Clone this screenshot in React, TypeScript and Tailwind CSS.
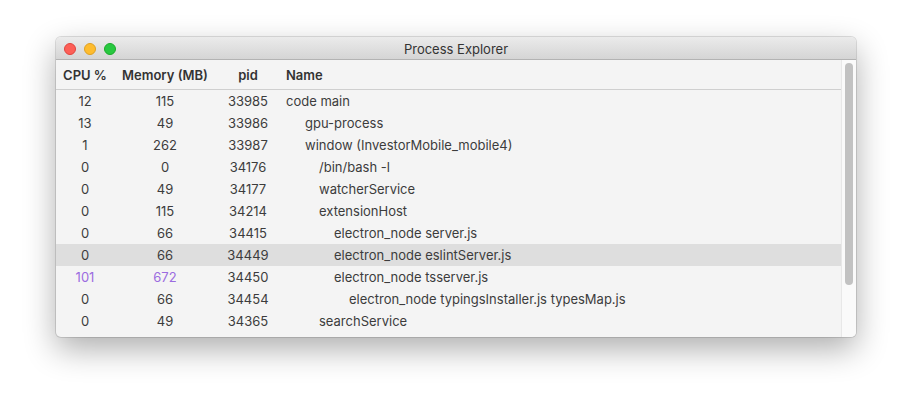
import React from "react";

type Row = { cpu: string; mem: string; pid: string; name: string; indent: number; hot?: boolean; sel?: boolean };

const rows: Row[] = [
  { cpu: "12", mem: "115", pid: "33985", name: "code main", indent: 0 },
  { cpu: "13", mem: "49", pid: "33986", name: "gpu-process", indent: 1 },
  { cpu: "1", mem: "262", pid: "33987", name: "window (InvestorMobile_mobile4)", indent: 1 },
  { cpu: "0", mem: "0", pid: "34176", name: "/bin/bash -l", indent: 2 },
  { cpu: "0", mem: "49", pid: "34177", name: "watcherService", indent: 2 },
  { cpu: "0", mem: "115", pid: "34214", name: "extensionHost", indent: 2 },
  { cpu: "0", mem: "66", pid: "34415", name: "electron_node server.js", indent: 3 },
  { cpu: "0", mem: "66", pid: "34449", name: "electron_node eslintServer.js", indent: 3, sel: true },
  { cpu: "101", mem: "672", pid: "34450", name: "electron_node tsserver.js", indent: 3, hot: true },
  { cpu: "0", mem: "66", pid: "34454", name: "electron_node typingsInstaller.js typesMap.js", indent: 4 },
  { cpu: "0", mem: "49", pid: "34365", name: "searchService", indent: 2 },
];

const indentCls = ["pl-[6px]", "pl-[25px]", "pl-[39px]", "pl-[54px]", "pl-[69px]"];

export default function App() {
  return (
    <div
      className="w-[912px] h-[412px] bg-white pl-[56px] pt-[37px]"
      style={{ fontFamily: "Inter, 'Noto Sans', sans-serif" }}
    >
      <div className="w-[800px] h-[300px] rounded-[5px] overflow-hidden flex flex-col bg-[#f4f4f4] shadow-[0_12px_32px_rgba(0,0,0,0.32),0_0_0_1px_rgba(0,0,0,0.12)]">
        {/* Title bar */}
        <div className="relative h-[23px] shrink-0 flex items-center bg-gradient-to-b from-[#ebebeb] to-[#d5d5d5] border-b border-[#b3b3b3]">
          <div className="flex items-center gap-[8px] pl-[8px] pt-[2px]">
            <span className="w-[12px] h-[12px] rounded-full bg-[#fd5f57] border border-[#e0443e]" />
            <span className="w-[12px] h-[12px] rounded-full bg-[#febc2e] border border-[#dea123]" />
            <span className="w-[12px] h-[12px] rounded-full bg-[#28c840] border border-[#1aab29]" />
          </div>
          <div className="absolute inset-0 pt-[4px] flex items-center justify-center text-[13px] text-[#333]">
            Process Explorer
          </div>
        </div>
        {/* Body */}
        <div className="flex flex-1 min-h-0">
          <div className="flex-1 min-w-0 overflow-hidden">
            <div className="flex items-center h-[30px] pt-[2px] border-b border-[#cfcfcf] text-[13px] font-semibold text-[#333]">
              <div className="w-[58px] text-center">CPU %</div>
              <div className="w-[102px] text-center">Memory (MB)</div>
              <div className="w-[64px] text-center">pid</div>
              <div className="pl-[6px]">Name</div>
            </div>
            {rows.map((r) => (
              <div
                key={r.pid}
                className={`flex items-center h-[22px] pt-[1px] text-[13px] text-[#3c3c3c] ${r.sel ? "bg-[#dedede]" : ""}`}
              >
                <div className={`w-[58px] text-center ${r.hot ? "text-[#9b6be0]" : ""}`}>{r.cpu}</div>
                <div className={`w-[102px] text-center ${r.hot ? "text-[#9b6be0]" : ""}`}>{r.mem}</div>
                <div className="w-[64px] text-center">{r.pid}</div>
                <div className={`whitespace-nowrap ${indentCls[r.indent]}`}>{r.name}</div>
              </div>
            ))}
          </div>
          {/* Scrollbar */}
          <div className="w-[15px] shrink-0 bg-[#fafafa] border-l border-[#e8e8e8] pt-[3px] pl-[3px]">
            <div className="w-[8px] h-[222px] rounded-full bg-[#c2c2c2]" />
          </div>
        </div>
      </div>
    </div>
  );
}
